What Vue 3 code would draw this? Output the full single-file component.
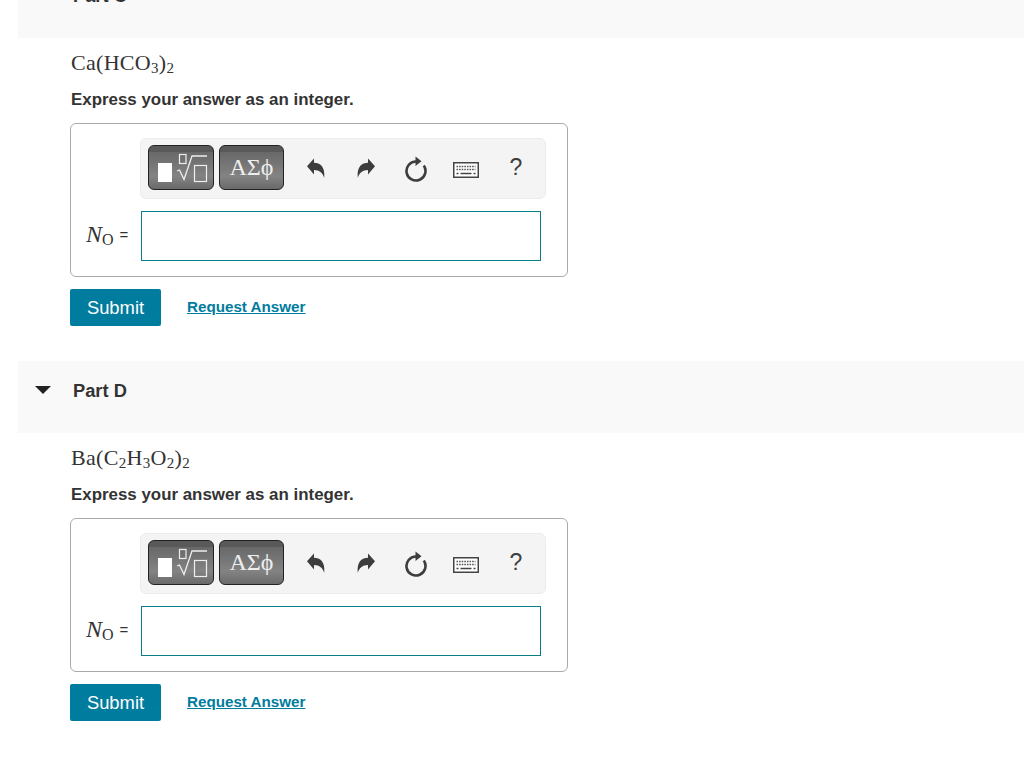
<template>
  <div class="page">
    <section v-for="part in parts" :key="part.name" class="part">
      <div class="part-header">
        <span class="caret"></span>
        <h3>{{ part.name }}</h3>
      </div>
      <div class="part-body">
        <p class="formula">
          <template v-for="(bit, i) in part.formula" :key="i">
            <sub v-if="bit.sub">{{ bit.sub }}</sub>
            <span v-else>{{ bit.text }}</span>
          </template>
        </p>
        <p class="instruction">Express your answer as an integer.</p>

        <div class="answer-box">
          <div class="toolbar">
            <button class="tpl-btn math-btn" type="button" aria-label="Templates">
              <svg width="64" height="43" viewBox="0 0 64 43">
                <rect x="9" y="17" width="14" height="19" fill="#fff" />
                <rect x="30.5" y="8.5" width="6.5" height="9" fill="none" stroke="#eee" stroke-width="1.2" />
                <path d="M28 25l2.5-1 4.5 9.5 8-23.5h15" fill="none" stroke="#eee" stroke-width="1.3" />
                <rect x="45.5" y="19.5" width="12" height="16" fill="none" stroke="#eee" stroke-width="1.2" />
              </svg>
            </button>
            <button class="tpl-btn greek-btn" type="button">ΑΣϕ</button>

            <button class="tool undo" type="button" aria-label="Undo">
              <svg width="20" height="22" viewBox="0 0 20 22">
                <path fill="#3d3d3d" d="M1 9.2L8 1.5v4.2C14 5.7 19.5 9.5 18.2 21C17 16 13.5 13 8 13v4.5z" />
              </svg>
            </button>
            <button class="tool redo" type="button" aria-label="Redo">
              <svg width="20" height="22" viewBox="0 0 20 22">
                <path fill="#3d3d3d" transform="matrix(-1 0 0 1 20 0)" d="M1 9.2L8 1.5v4.2C14 5.7 19.5 9.5 18.2 21C17 16 13.5 13 8 13v4.5z" />
              </svg>
            </button>
            <button class="tool reset" type="button" aria-label="Reset">
              <svg width="24" height="26" viewBox="0 0 24 26">
                <path d="M19.8 9.6A9.5 9.5 0 1 1 12 5.5" fill="none" stroke="#3d3d3d" stroke-width="2.6" />
                <path d="M17.5 5.3L11.5 0.6v9.4z" fill="#3d3d3d" />
              </svg>
            </button>
            <button class="tool keys" type="button" aria-label="Keyboard">
              <svg width="26" height="16" viewBox="0 0 26 16">
                <rect x="0.75" y="0.75" width="24.5" height="14.5" fill="#fff" stroke="#444" stroke-width="1.5" />
                <path d="M3.5 4.5h19M3.5 7.5h19" stroke="#555" stroke-width="1.6" stroke-dasharray="1.6 1" />
                <path d="M3.5 11.5h2M7.5 11.5h11M20.5 11.5h2" stroke="#444" stroke-width="1.4" />
              </svg>
            </button>
            <button class="tool help" type="button" aria-label="Help">?</button>
          </div>

          <div class="answer-row">
            <label class="answer-label"><i>N</i><sub>O</sub><span class="eq">=</span></label>
            <input class="answer-input" type="text" />
          </div>
        </div>

        <div class="actions">
          <button class="submit" type="button">Submit</button>
          <a class="request" href="#">Request Answer</a>
        </div>
      </div>
    </section>
  </div>
</template>

<script setup>
const parts = [
  {
    name: 'Part C',
    formula: [
      { text: 'Ca(HCO' },
      { sub: '3' },
      { text: ')' },
      { sub: '2' },
    ],
  },
  {
    name: 'Part D',
    formula: [
      { text: 'Ba(C' },
      { sub: '2' },
      { text: 'H' },
      { sub: '3' },
      { text: 'O' },
      { sub: '2' },
      { text: ')' },
      { sub: '2' },
    ],
  },
]
</script>

<style>
html,
body {
  margin: 0;
  background: #fff;
  overflow: hidden;
}
</style>

<style scoped>
.page {
  margin-top: -34px;
  padding-left: 18px;
  font-family: "Liberation Sans", Arial, sans-serif;
  color: #333;
}

.part {
  height: 395px;
}

.part-header {
  height: 72px;
  background: #f9f9f9;
  display: flex;
  align-items: flex-start;
  padding-top: 19px;
  box-sizing: border-box;
}

.caret {
  width: 0;
  height: 0;
  margin: 6px 0 0 17px;
  border-left: 8px solid transparent;
  border-right: 8px solid transparent;
  border-top: 8px solid #222;
}

.part-header h3 {
  margin: 0 0 0 22px;
  font-size: 18.3px;
  line-height: 21px;
  font-weight: 700;
  color: #333;
}

.part-body {
  padding: 12px 0 0 53px;
}

.formula {
  margin: 0;
  height: 26px;
  line-height: 26px;
  font-family: "Liberation Serif", "Times New Roman", serif;
  font-size: 22px;
  letter-spacing: 0.3px;
  color: #333;
}

.formula sub {
  font-size: 15px;
  line-height: 0;
  vertical-align: -3px;
}

.instruction {
  margin: 14px 0 0;
  height: 20px;
  line-height: 20px;
  font-size: 16.9px;
  font-weight: 700;
  color: #333;
}

.answer-box {
  width: 498px;
  height: 154px;
  margin: 13px 0 0 -1px;
  box-sizing: border-box;
  border: 1px solid #aaa;
  border-radius: 6px;
  padding: 14px 0 0 69px;
  background: #fff;
}

.toolbar {
  width: 406px;
  height: 61px;
  box-sizing: border-box;
  padding: 6px 0 0 7px;
  display: flex;
  align-items: flex-start;
  background: #f4f4f4;
  border: 1px solid #ececec;
  border-radius: 6px;
}

.tpl-btn {
  height: 45px;
  margin: 0 5px 0 0;
  padding: 0;
  border: 1px solid #222;
  border-radius: 6px;
  background: linear-gradient(#595959 0 6px, #686868 6px, #838383 70%, #6a6a6a);
  color: #eee;
  display: flex;
  align-items: center;
  justify-content: center;
}

.math-btn {
  width: 66px;
}

.greek-btn {
  width: 65px;
  font-family: "Liberation Serif", serif;
  font-size: 24px;
}

.tool {
  width: 20px;
  height: 45px;
  margin: 0;
  padding: 0;
  border: 0;
  background: none;
  display: flex;
  align-items: center;
  justify-content: center;
  color: #3d3d3d;
}

.tool svg {
  flex-shrink: 0;
}

.undo {
  margin-left: 17px;
}

.redo {
  margin-left: 30px;
}

.reset {
  margin-left: 30px;
}

.reset svg {
  margin-top: 2px;
}

.keys {
  margin-left: 30px;
}

.keys svg {
  margin-top: 5px;
}

.help {
  margin-left: 30px;
  font-family: "Liberation Sans", Arial, sans-serif;
  font-size: 23px;
}

.answer-row {
  display: flex;
  align-items: center;
  margin: 12px 0 0 -69px;
}

.answer-label {
  width: 70px;
  box-sizing: border-box;
  padding: 0 0 3px 15px;
  white-space: nowrap;
  font-family: "Liberation Serif", serif;
  font-size: 24px;
  color: #333;
}

.answer-label sub {
  font-size: 16px;
  line-height: 0;
  vertical-align: -3px;
}

.eq {
  margin-left: 6px;
  font-family: "Liberation Sans", Arial, sans-serif;
  font-size: 15px;
  vertical-align: 2px;
}

.answer-input {
  width: 400px;
  height: 50px;
  box-sizing: border-box;
  padding: 0 8px;
  border: 1px solid #087f87;
  border-radius: 0;
  background: #fff;
  outline: none;
}

.actions {
  display: flex;
  align-items: center;
  margin: 12px 0 0 -1px;
}

.submit {
  width: 91px;
  height: 37px;
  padding: 0;
  border: 0;
  border-radius: 2px;
  background: #007c9e;
  color: #fff;
  font-family: "Liberation Sans", Arial, sans-serif;
  font-size: 18.4px;
}

.request {
  margin: -2px 0 0 26px;
  color: #007c9e;
  font-size: 15.2px;
  font-weight: 700;
  text-decoration: underline;
}
</style>
